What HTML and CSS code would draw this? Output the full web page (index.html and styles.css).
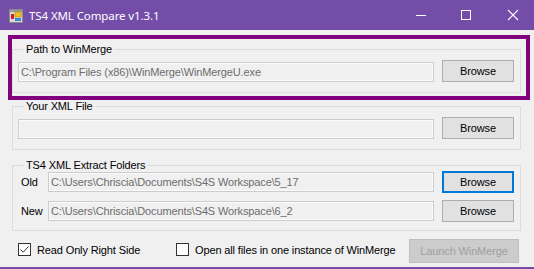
FILE: index.html
```html
<!DOCTYPE html>
<html>
<head>
<meta charset="utf-8">
<link rel="stylesheet" href="styles.css">
</head>
<body>
<div class="window">
  <div class="titlebar">
    <svg class="app-icon" width="14" height="14" viewBox="0 0 14 14">
      <rect x="0.5" y="0.5" width="13" height="13" fill="#d8d8d8" stroke="#8a8a8a"/>
      <rect x="1" y="1" width="12" height="2" fill="#9a9a9a"/>
      <rect x="2" y="5" width="3" height="5" fill="#d42020"/>
      <rect x="6" y="3" width="6" height="5" fill="#f2c21b" stroke="#b08800" stroke-width="0.6"/>
      <rect x="6" y="9" width="6" height="3" fill="#3a86d8"/>
    </svg>
    <span class="title">TS4 XML Compare v1.3.1</span>
    <div class="controls">
      <svg width="46" height="30" viewBox="0 0 46 30"><line x1="18" y1="15.5" x2="28" y2="15.5" stroke="#fff" stroke-width="1"/></svg>
      <svg width="46" height="30" viewBox="0 0 46 30"><rect x="17.5" y="10.5" width="9" height="9" fill="none" stroke="#fff" stroke-width="1"/></svg>
      <svg width="46" height="30" viewBox="0 0 46 30"><path d="M18 10 L28 20 M28 10 L18 20" stroke="#fff" stroke-width="1.1"/></svg>
    </div>
  </div>
  <div class="content">
    <div class="group g1">
      <div class="legend">Path to WinMerge</div>
      <div class="row">
        <div class="textbox wide">C:\Program Files (x86)\WinMerge\WinMergeU.exe</div>
        <div class="button">Browse</div>
      </div>
    </div>
    <div class="group g2">
      <div class="legend">Your XML File</div>
      <div class="row">
        <div class="textbox wide"></div>
        <div class="button">Browse</div>
      </div>
    </div>
    <div class="group g3">
      <div class="legend">TS4 XML Extract Folders</div>
      <div class="row center first">
        <div class="rowlabel">Old</div>
        <div class="textbox narrow">C:\Users\Chriscia\Documents\S4S Workspace\5_17</div>
        <div class="button focused">Browse</div>
      </div>
      <div class="row center second">
        <div class="rowlabel">New</div>
        <div class="textbox narrow">C:\Users\Chriscia\Documents\S4S Workspace\6_2</div>
        <div class="button">Browse</div>
      </div>
    </div>
    <div class="bottom">
      <div class="check c1"><span class="box checked"><svg width="11" height="11" viewBox="0 0 11 11"><path d="M1.5 5.5 L4.2 8.2 L9.5 2.5" fill="none" stroke="#333" stroke-width="1"/></svg></span><span>Read Only Right Side</span></div>
      <div class="check c2"><span class="box"></span><span>Open all files in one instance of WinMerge</span></div>
      <div class="button disabled">Launch WinMerge</div>
    </div>
  </div>
  <div class="highlight"></div>
</div>
</body>
</html>
```
FILE: styles.css
```css
* { box-sizing: border-box; }
html, body { margin: 0; padding: 0; }
body {
  width: 534px;
  height: 269px;
  overflow: hidden;
  background: #f0f0f0;
  font-family: "Liberation Sans", Arial, sans-serif;
  font-size: 11px;
  letter-spacing: -0.13px;
  color: #000;
}
.window {
  position: relative;
  width: 534px;
  height: 269px;
  display: flex;
  flex-direction: column;
  border-bottom: 2px solid #744da9;
}
.titlebar {
  height: 30px;
  flex: none;
  background: #744da9;
  display: flex;
  align-items: center;
  color: #fff;
}
.app-icon { margin-left: 9px; margin-top: 2px; flex: none; }
.title {
  margin-left: 6px;
  font-family: "Noto Sans", "Open Sans", sans-serif;
  font-size: 11.5px;
  letter-spacing: -0.1px;
  margin-top: 1px;
}
.controls {
  margin-left: auto;
  display: flex;
  margin-right: -2px;
}
.controls svg { display: block; }
.content {
  flex: 1;
  padding: 19px 13px 0 12px;
  display: flex;
  flex-direction: column;
}
.group {
  border: 1px solid #dcdcdc;
  padding: 0 7px 10px 5px;
}
.g2 { margin-top: 13px; }
.g3 { margin-top: 15px; padding-bottom: 8px; }
.legend {
  margin: -7px 0 0 6px;
  padding: 0 2px 0 2px;
  width: max-content;
  background: #f0f0f0;
  line-height: 13px;
  height: 13px;
}
.row {
  display: flex;
  align-items: flex-end;
  margin-top: 4px;
}
.row.center { align-items: center; }
.row.first { margin-top: -1px; }
.row.second { margin-top: 7px; }
.rowlabel {
  width: 30px;
  padding-left: 3px;
  flex: none;
}
.textbox {
  height: 20px;
  border: 1px solid #cccccc;
  box-shadow: inset 0 0 0 1px #fbfbfb;
  background: #f0f0f0;
  color: #6d6d6d;
  padding: 0 0 0 2px;
  line-height: 18px;
  white-space: nowrap;
  overflow: hidden;
  flex: none;
}
.textbox.wide { width: 416px; }
.textbox.narrow { width: 386px; }
.button {
  width: 72px;
  height: 22px;
  margin-left: 8px;
  flex: none;
  border: 1px solid #adadad;
  background: #e1e1e1;
  display: flex;
  align-items: center;
  justify-content: center;
  color: #000;
}
.button.focused { border: 2px solid #0078d7; }
.bottom {
  display: flex;
  align-items: center;
  margin-top: 8px;
  padding-left: 6px;
  height: 24px;
}
.check {
  display: flex;
  align-items: center;
  margin-top: -3px;
  flex: none;
}
.c1 { width: 158px; }
.c2 { width: 233px; }
.box {
  width: 13px;
  height: 13px;
  border: 1px solid #333333;
  background: #ffffff;
  margin-right: 6px;
  display: flex;
  align-items: center;
  justify-content: center;
  flex: none;
}
.box svg { display: block; }
.button.disabled {
  width: 110px;
  height: 24px;
  margin-left: 0;
  background: #cccccc;
  border: 1px solid #bfbfbf;
  color: #a0a0a0;
}
.highlight {
  position: absolute;
  left: 8px;
  top: 35px;
  width: 522px;
  height: 65px;
  border: 4px solid #800080;
  pointer-events: none;
}
```
